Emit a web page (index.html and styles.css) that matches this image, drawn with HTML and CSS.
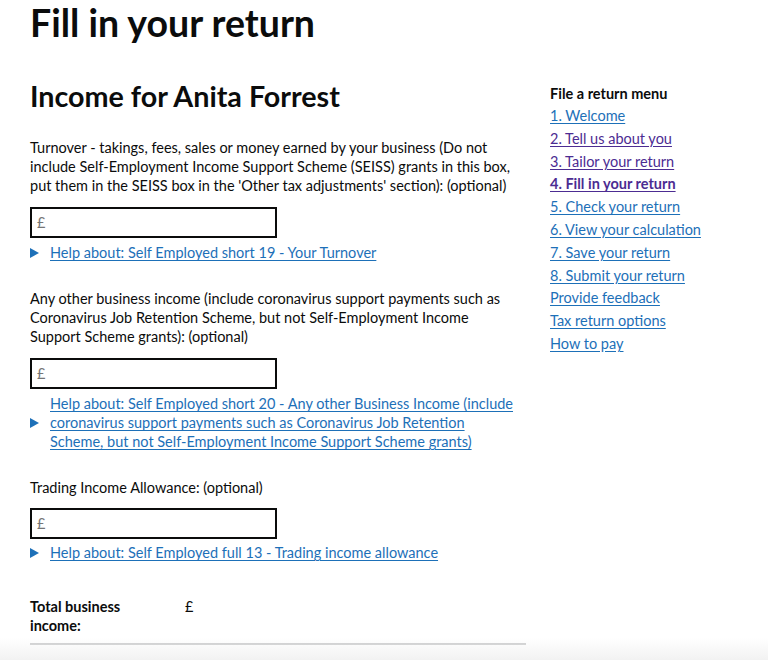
FILE: index.html
```html
<!DOCTYPE html>
<html lang="en">
<head>
<meta charset="utf-8">
<title>Fill in your return</title>
<link rel="stylesheet" href="styles.css">
</head>
<body>
<div class="page">
  <h1 class="title">Fill in your return</h1>
  <div class="layout">
    <main class="main">
      <h2 class="subtitle">Income for Anita Forrest</h2>

      <div class="field">
        <label class="label">Turnover - takings, fees, sales or money earned by your business (Do not include Self-Employment Income Support Scheme (SEISS) grants in this box, put them in the SEISS box in the 'Other tax adjustments' section): (optional)</label>
        <div class="input"><span class="placeholder">£</span></div>
        <div class="help">
          <span class="arrow"></span>
          <a class="help-link" href="#">Help about: Self Employed short 19 - Your Turnover</a>
        </div>
      </div>

      <div class="field">
        <label class="label">Any other business income (include coronavirus support payments such as Coronavirus Job Retention Scheme, but not Self-Employment Income Support Scheme grants): (optional)</label>
        <div class="input"><span class="placeholder">£</span></div>
        <div class="help">
          <span class="arrow"></span>
          <a class="help-link" href="#">Help about: Self Employed short 20 - Any other Business Income (include<br>coronavirus support payments such as Coronavirus Job Retention<br>Scheme, but not Self-Employment Income Support Scheme grants)</a>
        </div>
      </div>

      <div class="field field-last">
        <label class="label">Trading Income Allowance: (optional)</label>
        <div class="input"><span class="placeholder">£</span></div>
        <div class="help">
          <span class="arrow"></span>
          <a class="help-link" href="#">Help about: Self Employed full 13 - Trading income allowance</a>
        </div>
      </div>

      <div class="total">
        <div class="total-label">Total business income:</div>
        <div class="total-value">£</div>
      </div>
    </main>
    <nav class="menu">
      <div class="menu-title">File a return menu</div>
      <a class="menu-link" href="#">1. Welcome</a>
      <a class="menu-link visited" href="#">2. Tell us about you</a>
      <a class="menu-link visited" href="#">3. Tailor your return</a>
      <a class="menu-link visited current" href="#">4. Fill in your return</a>
      <a class="menu-link" href="#">5. Check your return</a>
      <a class="menu-link" href="#">6. View your calculation</a>
      <a class="menu-link" href="#">7. Save your return</a>
      <a class="menu-link" href="#">8. Submit your return</a>
      <a class="menu-link" href="#">Provide feedback</a>
      <a class="menu-link" href="#">Tax return options</a>
      <a class="menu-link" href="#">How to pay</a>
    </nav>
  </div>
</div>
<div class="fade"></div>
</body>
</html>
```

FILE: styles.css
```css
html, body {
  margin: 0;
  padding: 0;
  background: #ffffff;
  height: 660px;
  overflow: hidden;
}
body {
  font-family: Lato, "Liberation Sans", Arial, sans-serif;
  color: #0b0c0c;
  font-size: 14.5px;
  line-height: 19px;
  position: relative;
}
.page {
  padding: 0 0 0 30px;
}
.title {
  margin: 0;
  padding-top: 1px;
  font-size: 37.5px;
  line-height: 44px;
  font-weight: 700;
}
.layout {
  display: flex;
  gap: 24px;
  margin-top: 34px;
}
.main {
  width: 496px;
  flex: none;
}
.subtitle {
  margin: 0 0 25px;
  font-size: 28.7px;
  line-height: 34px;
  font-weight: 700;
}
.field {
  margin-bottom: 27px;
}
.field-last {
  margin-bottom: 35px;
}
.label {
  display: block;
  max-width: 488px;
  margin-bottom: 12px;
}
.field-last .label {
  margin-bottom: 11px;
}
.input {
  width: 247px;
  height: 31px;
  border: 2px solid #0b0c0c;
  box-sizing: border-box;
  display: flex;
  align-items: center;
  padding: 0 0 0 5px;
}
.placeholder {
  color: #757575;
}
.help {
  display: flex;
  align-items: center;
  margin-top: 5px;
}
.field-last .help {
  margin-top: 4px;
}
.arrow {
  flex: none;
  width: 0;
  height: 0;
  border-top: 5px solid transparent;
  border-bottom: 5px solid transparent;
  border-left: 9px solid #1d70b8;
  margin-right: 11px;
}
.help-link {
  color: #1d70b8;
  text-decoration: underline;
  text-underline-offset: 2px;
  width: 476px;
}
.total {
  display: flex;
  font-weight: 700;
  padding-bottom: 8px;
  border-bottom: 2px solid #c8c9ca;
  margin-top: 8px;
}
.total-label {
  width: 130px;
  margin-right: 25px;
}
.total-value {
  font-weight: 400;
}
.menu {
  display: flex;
  flex-direction: column;
  padding-top: 5px;
}
.menu-title {
  font-weight: 700;
  margin-bottom: 2px;
}
.menu-link {
  color: #1d70b8;
  text-decoration: underline;
  text-underline-offset: 2px;
  line-height: 22.8px;
}
.menu-link.visited {
  color: #4c2c92;
}
.menu-link.current {
  font-weight: 700;
}
.fade {
  position: absolute;
  left: 0;
  right: 0;
  bottom: 0;
  height: 22px;
  background: linear-gradient(to bottom, rgba(243,243,243,0), #f2f2f2);
}
```
